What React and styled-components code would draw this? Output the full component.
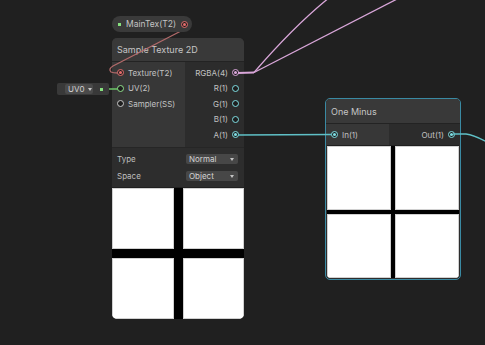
import styled, { createGlobalStyle } from "styled-components";

const GlobalStyle = createGlobalStyle`
  html, body {
    margin: 0;
    padding: 0;
    background: #202020;
  }
  body {
    font-family: Inter, "Noto Sans", sans-serif;
  }
`;

const Canvas = styled.div`
  position: relative;
  width: 485px;
  height: 345px;
  overflow: hidden;
  background: #202020;
`;

const Node = styled.div`
  position: absolute;
  left: ${({ x }) => x}px;
  top: ${({ y }) => y}px;
  width: ${({ w }) => w}px;
  z-index: 1;
  display: flex;
  flex-direction: column;
  box-sizing: border-box;
  border-radius: 5px;
  overflow: hidden;
  background: #2d2d2d;
  border: ${({ selected }) => (selected ? "1px solid #3a8aa3" : "none")};
`;

const Title = styled.div`
  height: ${({ h }) => h}px;
  box-sizing: border-box;
  display: flex;
  align-items: center;
  padding: 0 5px;
  background: #393939;
  border-bottom: 1px solid #232323;
  color: #c6c6c6;
  font-size: 9px;
`;

const Ports = styled.div`
  display: flex;
`;

const Inputs = styled.div`
  width: ${({ w }) => w}px;
  box-sizing: border-box;
  padding: 3px 0 ${({ pb }) => pb}px;
  background: #373737;
`;

const Outputs = styled.div`
  flex: 1;
  box-sizing: border-box;
  padding: 3px 0 ${({ pb }) => pb}px;
  background: #2c2c2c;
`;

const PortRow = styled.div`
  height: 15.5px;
  display: flex;
  align-items: center;
  justify-content: ${({ out }) => (out ? "flex-end" : "flex-start")};
  gap: 4px;
  padding: 0 5px;
  color: #c2c2c2;
  font-size: 8px;
  white-space: nowrap;
`;

const Port = styled.span`
  width: 7px;
  height: 7px;
  box-sizing: border-box;
  flex: none;
  display: grid;
  place-items: center;
  border-radius: 50%;
  border: 1px solid ${({ color }) => color};
  background: #1e1e1e;

  &::after {
    content: "";
    width: 3px;
    height: 3px;
    border-radius: 50%;
    background: ${({ color, on }) => (on ? color : "transparent")};
  }
`;

const Props = styled.div`
  padding: 3px 6px 3px 5px;
  background: #2d2d2d;
  border-top: 1px solid #262626;
  box-sizing: border-box;
  height: 40px;
`;

const PropRow = styled.div`
  height: 17px;
  display: flex;
  align-items: center;
  justify-content: space-between;
  color: #bdbdbd;
  font-size: 8px;
`;

const Dropdown = styled.div`
  width: 52px;
  height: 10px;
  box-sizing: border-box;
  display: flex;
  align-items: center;
  justify-content: space-between;
  padding: 0 4px 0 3px;
  border-radius: 2px;
  background: #474747;
  color: #d2d2d2;
  font-size: 8px;
`;

const Caret = styled.span`
  width: 0;
  height: 0;
  border-left: 2.5px solid transparent;
  border-right: 2.5px solid transparent;
  border-top: 3px solid #c4c4c4;
`;

const Preview = styled.div`
  display: grid;
  grid-template-columns: 1fr 1fr;
  grid-template-rows: 1fr 1fr;
  gap: ${({ gap }) => gap}px;
  height: ${({ h }) => h}px;
  margin: 0 ${({ inset }) => inset}px ${({ inset }) => inset}px;
  background: #000;
  border-top: 1px solid #1f1f1f;
  border-radius: 0 0 4px 4px;
  overflow: hidden;
`;

const Quad = styled.div`
  background: #ffffff;
  box-shadow: inset 0 0 0 1px #d0d0d0;
`;

const Pill = styled.div`
  position: absolute;
  left: 112px;
  top: 16px;
  width: 80px;
  height: 16px;
  z-index: 3;
  box-sizing: border-box;
  display: flex;
  align-items: center;
  gap: 5px;
  padding: 0 9px 0 6px;
  border-radius: 8px;
  background: #3a3a3a;
  color: #c4c4c4;
  font-size: 8.5px;
  white-space: nowrap;

  ${Port} {
    margin-left: auto;
  }
`;

const Dot = styled.span`
  width: 3px;
  height: 3px;
  flex: none;
  background: #86e07e;
`;

const UvNode = styled.div`
  position: absolute;
  left: 57px;
  top: 83px;
  width: 52px;
  height: 12px;
  z-index: 3;
  box-sizing: border-box;
  display: flex;
  align-items: center;
  padding: 0 6px 0 8px;
  background: #393939;
  border-radius: 2px;

  ${Dot} {
    margin-left: auto;
  }
`;

const Chip = styled.div`
  width: 28px;
  height: 10px;
  box-sizing: border-box;
  display: flex;
  align-items: center;
  gap: 4px;
  padding: 0 3px;
  background: #4b4b4b;
  border-radius: 2px;
  color: #d0d0d0;
  font-size: 8px;
`;

const Wires = styled.svg`
  position: absolute;
  left: 0;
  top: 0;
  z-index: 2;
  pointer-events: none;
`;

const RED = "#e36c6c";
const GREEN = "#8ee08a";
const PINK = "#d9a6d9";
const CYAN = "#7fdde2";
const GREY = "#c8c8c8";

const inputs = [
  { label: "Texture(T2)", color: RED, on: true },
  { label: "UV(2)", color: GREEN, on: false },
  { label: "Sampler(SS)", color: GREY, on: false },
];

const outputs = [
  { label: "RGBA(4)", color: PINK, on: true },
  { label: "R(1)", color: CYAN },
  { label: "G(1)", color: CYAN },
  { label: "B(1)", color: CYAN },
  { label: "A(1)", color: CYAN, on: true },
];

const Checker = ({ h, gap, inset }) => (
  <Preview h={h} gap={gap} inset={inset}>
    <Quad />
    <Quad />
    <Quad />
    <Quad />
  </Preview>
);

export default function App() {
  return (
    <>
      <GlobalStyle />
      <Canvas>
        <Wires width="485" height="345" viewBox="0 0 485 345">
          <path
            d="M181 31 L113 66 Q108 69 111 72 Q113 73 118 73"
            stroke="#b26a6a"
            strokeWidth="1.3"
            fill="none"
          />
          <path d="M103 89 L118 89" stroke="#6ec86a" strokeWidth="1.5" fill="none" />
          <path d="M238 73 L254 72.5" stroke={PINK} strokeWidth="1.8" fill="none" />
          <path d="M254 72.5 Q294 26 330 -3" stroke={PINK} strokeWidth="1.3" fill="none" />
          <path d="M254 72.5 L401 -3" stroke={PINK} strokeWidth="1.3" fill="none" />
          <path d="M238 135 L332 134.5" stroke="#5fc0c6" strokeWidth="1.4" fill="none" />
          <path d="M453 134 L466 134 Q474 135 487 142" stroke="#5fc0c6" strokeWidth="1.4" fill="none" />
        </Wires>

        <Pill>
          <Dot />
          MainTex(T2)
          <Port color={RED} on />
        </Pill>

        <UvNode>
          <Chip>
            UV0
            <Caret />
          </Chip>
          <Dot />
        </UvNode>

        <Node x={112} y={38} w={132}>
          <Title h={24}>Sample Texture 2D</Title>
          <Ports>
            <Inputs w={73} pb={4}>
              {inputs.map((p) => (
                <PortRow key={p.label}>
                  <Port color={p.color} on={p.on} />
                  {p.label}
                </PortRow>
              ))}
            </Inputs>
            <Outputs pb={4}>
              {outputs.map((p) => (
                <PortRow out key={p.label}>
                  {p.label}
                  <Port color={p.color} on={p.on} />
                </PortRow>
              ))}
            </Outputs>
          </Ports>
          <Props>
            <PropRow>
              Type
              <Dropdown>
                Normal
                <Caret />
              </Dropdown>
            </PropRow>
            <PropRow>
              Space
              <Dropdown>
                Object
                <Caret />
              </Dropdown>
            </PropRow>
          </Props>
          <Checker h={131} gap={9} inset={0} />
        </Node>

        <Node x={325} y={98} w={136} selected>
          <Title h={25}>One Minus</Title>
          <Ports>
            <Inputs w={63} pb={2.5}>
              <PortRow>
                <Port color={CYAN} on />
                In(1)
              </PortRow>
            </Inputs>
            <Outputs pb={2.5}>
              <PortRow out>
                Out(1)
                <Port color={CYAN} on />
              </PortRow>
            </Outputs>
          </Ports>
          <Checker h={132} gap={4} inset={1} />
        </Node>
      </Canvas>
    </>
  );
}
